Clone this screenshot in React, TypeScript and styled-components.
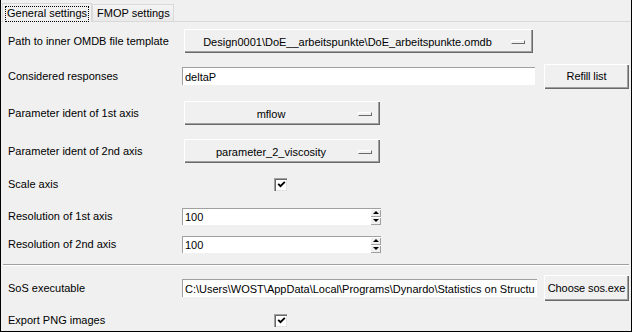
import React from "react";
import styled, { createGlobalStyle } from "styled-components";

const GlobalStyle = createGlobalStyle`
  html, body {
    margin: 0;
    padding: 0;
    background: #f0f0f0;
  }
  body {
    font-family: "Liberation Sans", Arial, sans-serif;
    font-size: 11px;
    color: #000;
  }
`;

const Window = styled.div`
  width: 632px;
  height: 332px;
  box-sizing: border-box;
  border-left: 1px solid #000;
  border-right: 1px solid #000;
  border-bottom: 1px solid #000;
  background: #f0f0f0;
  overflow: hidden;
`;

const TabBar = styled.div`
  display: flex;
  align-items: flex-end;
  height: 21px;
  padding-left: 1px;
`;

const Tab = styled.div<{ $active?: boolean }>`
  box-sizing: border-box;
  height: ${(p) => (p.$active ? "19px" : "17px")};
  padding: ${(p) => (p.$active ? "2px 2px 0 2px" : "0 3px 0 4px")};
  border: 1px solid #d9d9d9;
  border-bottom: none;
  background: ${(p) =>
    p.$active ? "#f0f0f0" : "linear-gradient(#f4f4f4, #e9e9e9)"};
  display: flex;
  align-items: ${(p) => (p.$active ? "flex-start" : "center")};
  margin-bottom: ${(p) => (p.$active ? "-1px" : "0")};
  position: relative;
  z-index: ${(p) => (p.$active ? 1 : 0)};
`;

const FocusRing = styled.span`
  border: 1px dotted #000;
  padding: 0 1px 1px 1px;
  line-height: 13px;
`;

const Pane = styled.div`
  border-top: 1px solid #d9d9d9;
`;

const Row = styled.div<{ $h: number }>`
  display: flex;
  align-items: center;
  height: ${(p) => p.$h}px;
`;

const Label = styled.div`
  width: 174px;
  padding-left: 7px;
  flex-shrink: 0;
  white-space: nowrap;
`;

const OptionButton = styled.div<{ $w: number }>`
  box-sizing: border-box;
  margin-left: 2px;
  width: ${(p) => p.$w}px;
  height: 24px;
  display: flex;
  align-items: center;
  background: #f0f0f0;
  box-shadow: inset 1px 1px #fff, inset -1px -1px #696969,
    inset -2px -2px #a0a0a0;
`;

const OptionText = styled.span`
  flex: 1;
  text-align: center;
  white-space: nowrap;
  padding-top: 1px;
`;

const Indicator = styled.span`
  width: 14px;
  height: 4px;
  margin-right: 8px;
  box-sizing: border-box;
  border-top: 1px solid #fff;
  border-left: 1px solid #fff;
  border-right: 1px solid #696969;
  border-bottom: 1px solid #696969;
  margin-top: 2px;
`;

const Entry = styled.div<{ $w: number; $h: number }>`
  box-sizing: border-box;
  width: ${(p) => p.$w}px;
  height: ${(p) => p.$h}px;
  flex-shrink: 0;
  background: #fff;
  border-top: 1px solid #a0a0a0;
  border-left: 1px solid #a0a0a0;
  display: flex;
  align-items: center;
  padding-left: 2px;
  white-space: nowrap;
  overflow: hidden;
`;

const EntryText = styled.span`
  flex: 1;
  min-width: 0;
  overflow: hidden;
  white-space: nowrap;
`;

const Spin = styled.div`
  display: flex;
  flex-direction: column;
  width: 11px;
  height: 100%;
  flex-shrink: 0;
`;

const SpinArrow = styled.div<{ $down?: boolean }>`
  flex: 1;
  display: flex;
  align-items: center;
  justify-content: center;
  background: #f0f0f0;
  box-shadow: inset 1px 1px #fff, inset -1px -1px #a0a0a0;
  &::after {
    content: "";
    width: 0;
    height: 0;
    border-left: 3px solid transparent;
    border-right: 3px solid transparent;
    ${(p) =>
      p.$down ? "border-top: 3px solid #000;" : "border-bottom: 3px solid #000;"}
  }
`;

const Button = styled.div<{ $w: number; $h: number }>`
  box-sizing: border-box;
  width: ${(p) => p.$w}px;
  height: ${(p) => p.$h}px;
  flex-shrink: 0;
  display: flex;
  align-items: center;
  justify-content: center;
  background: #f0f0f0;
  white-space: nowrap;
  letter-spacing: -0.1px;
  box-shadow: inset 1px 1px #fff, inset -1px -1px #696969,
    inset -2px -2px #a0a0a0;
`;

const Gap = styled.div<{ $w: number }>`
  width: ${(p) => p.$w}px;
  flex-shrink: 0;
`;

const CheckBox = styled.div`
  box-sizing: border-box;
  width: 13px;
  height: 13px;
  margin-left: 92px;
  background: #fff;
  border-top: 1px solid #a0a0a0;
  border-left: 1px solid #a0a0a0;
  box-shadow: inset 1px 1px #696969, inset -1px -1px #e3e3e3;
  display: flex;
  align-items: center;
  justify-content: center;
`;

const Separator = styled.div`
  height: 18px;
  display: flex;
  align-items: center;
  padding: 0 2px;
  &::after {
    content: "";
    flex: 1;
    height: 1px;
    background: #a0a0a0;
    border-bottom: 1px solid #fff;
  }
`;

const Check = () => (
  <svg width="9" height="9" viewBox="0 0 9 9">
    <path d="M1.2 3.8 L3.5 6.2 L7.8 1.8" stroke="#000" strokeWidth="1.9" fill="none" />
  </svg>
);

const SpinBox = ({ value }: { value: string }) => (
  <Entry $w={199} $h={17}>
    <EntryText>{value}</EntryText>
    <Spin>
      <SpinArrow />
      <SpinArrow $down />
    </Spin>
  </Entry>
);

export default function App() {
  return (
    <>
      <GlobalStyle />
      <Window>
        <TabBar>
          <Tab $active>
            <FocusRing>General settings</FocusRing>
          </Tab>
          <Tab>FMOP settings</Tab>
        </TabBar>
        <Pane>
          <Row $h={38}>
            <Label>Path to inner OMDB file template</Label>
            <OptionButton $w={349}>
              <OptionText>
                Design0001\DoE__arbeitspunkte\DoE_arbeitspunkte.omdb
              </OptionText>
              <Indicator />
            </OptionButton>
          </Row>
          <Row $h={32}>
            <Label>Considered responses</Label>
            <Entry $w={353} $h={18}>
              <EntryText>deltaP</EntryText>
            </Entry>
            <Gap $w={9} />
            <Button $w={85} $h={25}>
              Refill list
            </Button>
          </Row>
          <Row $h={42}>
            <Label>Parameter ident of 1st axis</Label>
            <OptionButton $w={196}>
              <OptionText>mflow</OptionText>
              <Indicator />
            </OptionButton>
          </Row>
          <Row $h={34}>
            <Label>Parameter ident of 2nd axis</Label>
            <OptionButton $w={196}>
              <OptionText>parameter_2_viscosity</OptionText>
              <Indicator />
            </OptionButton>
          </Row>
          <Row $h={32}>
            <Label>Scale axis</Label>
            <CheckBox>
              <Check />
            </CheckBox>
          </Row>
          <Row $h={32}>
            <Label>Resolution of 1st axis</Label>
            <SpinBox value="100" />
          </Row>
          <Row $h={24}>
            <Label>Resolution of 2nd axis</Label>
            <SpinBox value="100" />
          </Row>
          <Separator />
          <Row $h={28}>
            <Label>SoS executable</Label>
            <Entry $w={355} $h={18}>
              <EntryText>
                C:\Users\WOST\AppData\Local\Programs\Dynardo\Statistics on Structu
              </EntryText>
            </Entry>
            <Gap $w={7} />
            <Button $w={85} $h={26}>
              Choose sos.exe
            </Button>
          </Row>
          <Row $h={36}>
            <Label>Export PNG images</Label>
            <CheckBox>
              <Check />
            </CheckBox>
          </Row>
        </Pane>
      </Window>
    </>
  );
}
